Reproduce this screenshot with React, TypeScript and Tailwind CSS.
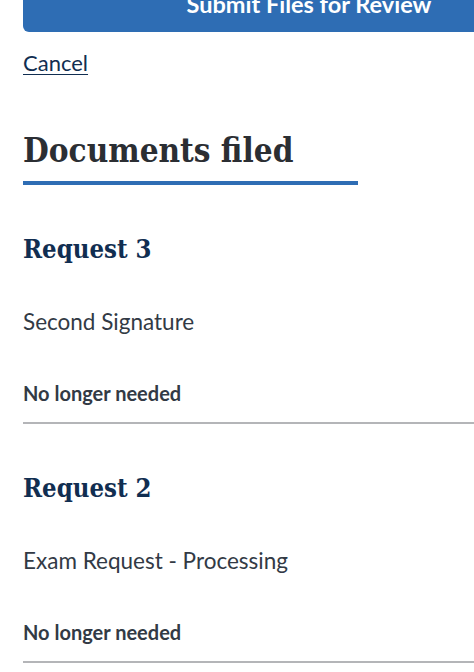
const sans = "font-['Lato','Liberation_Sans',Arial,sans-serif]";
const serif = "font-['DejaVu_Serif_Condensed','DejaVu_Serif',serif]";

const requests = [
  { title: "Request 3", doc: "Second Signature", status: "No longer needed" },
  { title: "Request 2", doc: "Exam Request - Processing", status: "No longer needed" },
];

function RequestItem({ title, doc, status }: { title: string; doc: string; status: string }) {
  return (
    <section>
      <h3 className={`${serif} mt-[50px] text-[25.5px] font-bold leading-[28px] text-[#112e51]`}>{title}</h3>
      <p className={`${sans} mt-[48px] text-[22.5px] leading-[21px] text-[#323a45]`}>{doc}</p>
      <p className={`${sans} mt-[52px] text-[20px] font-bold leading-[19px] text-[#323a45]`}>{status}</p>
      <div className="mt-[19px] h-[2px] bg-[#b4b5b8]" />
    </section>
  );
}

export default function App() {
  return (
    <div className="h-[672px] w-[474px] overflow-hidden bg-white">
      <div className="w-[595px] pl-[23px]">
        <button
          type="button"
          className={`${sans} -mt-[22px] flex h-[54px] w-full items-center justify-center rounded-[6px] bg-[#2e6db4] text-[23.5px] font-bold text-white`}
        >
          Submit Files for Review
        </button>
        <a href="#" className={`${sans} mt-[20px] block w-fit text-[22px] leading-[21px] text-[#112e51] underline decoration-1 underline-offset-[3px]`}>
          Cancel
        </a>
        <h2 className={`${serif} mt-[62px] text-[33px] font-bold leading-[32px] text-[#2b2e33]`}>Documents filed</h2>
        <div className="mt-[14px] h-[4px] w-[335px] bg-[#2e6db4]" />
        {requests.map((r) => (
          <RequestItem key={r.title} {...r} />
        ))}
      </div>
    </div>
  );
}
